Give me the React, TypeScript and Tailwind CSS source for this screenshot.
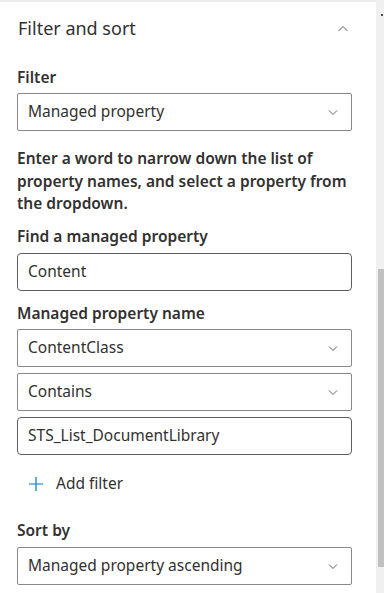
import React from 'react';

const font = { fontFamily: '"Noto Sans", "Open Sans", sans-serif' };

const Chevron: React.FC<{ up?: boolean }> = ({ up }) => (
    <svg width="12" height="12" viewBox="0 0 12 12" className="text-[#605e5c]">
        <path
            d={up ? 'M1.5 8 L6 3.5 L10.5 8' : 'M2 4.5 L6 8.5 L10 4.5'}
            fill="none"
            stroke="currentColor"
            strokeWidth="1"
        />
    </svg>
);

const Dropdown: React.FC<{ value: string }> = ({ value }) => (
    <div className="h-[38px] border border-[#8a8886] rounded-[2px] flex items-center justify-between pl-[10px] pr-[12px]">
        <span className="text-[15.5px] text-[#323130]">{value}</span>
        <Chevron />
    </div>
);

const TextBox: React.FC<{ value: string }> = ({ value }) => (
    <div className="h-[38px] border border-[#605e5c] rounded-[4px] flex items-center pl-[10px]">
        <span className="text-[15.5px] text-[#323130]">{value}</span>
    </div>
);

const Label: React.FC<{ children: React.ReactNode; className?: string }> = ({ children, className }) => (
    <div className={`text-[15.5px] font-semibold text-[#323130] leading-[22px] ${className ?? ''}`}>{children}</div>
);

export default function App() {
    return (
        <div className="w-[384px] h-[593px] flex bg-white overflow-hidden" style={font}>
            <div className="flex-1 border-t-2 border-[#edebe9] flex flex-col">
                {/* Header */}
                <div className="flex items-center justify-between pl-[18px] pr-[27px] pt-[8px] h-[45px]">
                    <span className="text-[18px] text-[#323130]">Filter and sort</span>
                    <Chevron up />
                </div>

                <div className="pl-[17px] pr-[24px] flex flex-col">
                    <Label className="mt-[19px] mb-[5px]">Filter</Label>
                    <Dropdown value="Managed property" />

                    <p className="mt-[16px] text-[15.5px] font-semibold text-[#323130] leading-[22.5px]">
                        Enter a word to narrow down the list of property names, and select a property from the dropdown.
                    </p>

                    <Label className="mt-[10px] mb-[6px]">Find a managed property</Label>
                    <TextBox value="Content" />

                    <Label className="mt-[11px] mb-[5px]">Managed property name</Label>
                    <div className="flex flex-col gap-[6px]">
                        <Dropdown value="ContentClass" />
                        <Dropdown value="Contains" />
                        <TextBox value="STS_List_DocumentLibrary" />
                    </div>

                    <div className="flex items-center h-[40px] mt-[9px] pl-[11px] gap-[12px]">
                        <svg width="16" height="16" viewBox="0 0 16 16" className="text-[#0078d4]">
                            <path d="M8 1 V15 M1 8 H15" stroke="currentColor" strokeWidth="1.2" fill="none" />
                        </svg>
                        <span className="text-[15.5px] text-[#323130]">Add filter</span>
                    </div>

                    <Label className="mt-[15px] mb-[6px]">Sort by</Label>
                    <Dropdown value="Managed property ascending" />
                </div>
            </div>

            {/* Scrollbar */}
            <div className="w-[8px] bg-[#f0f0f0] relative">
                <div className="absolute left-[5px] top-[14px] w-[2px] h-[2px] bg-[#505050]" />
                <div className="absolute left-[2px] right-0 top-[269px] h-[298px] bg-[#c1c1c1]" />
            </div>
        </div>
    );
}
